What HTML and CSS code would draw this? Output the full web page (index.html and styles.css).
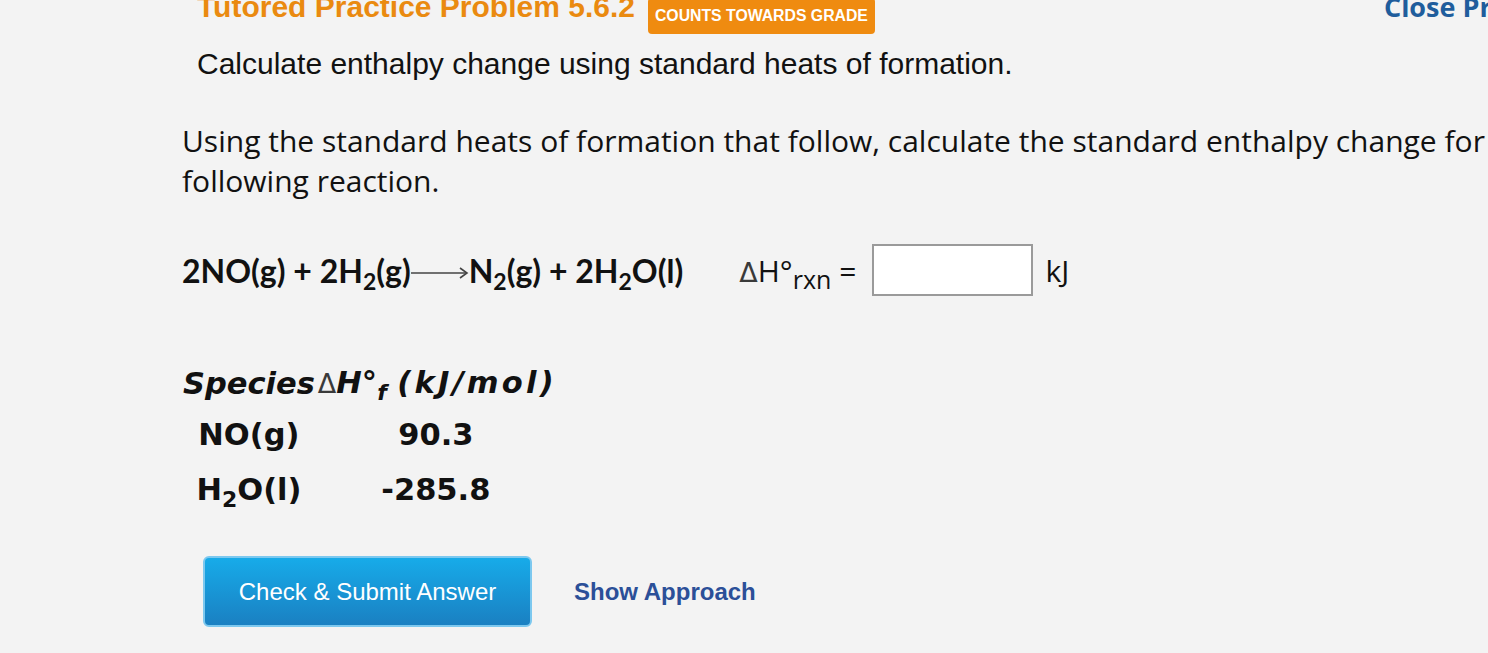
FILE: index.html
```html
<!DOCTYPE html>
<html>
<head>
<meta charset="utf-8">
<link rel="stylesheet" href="styles.css">
</head>
<body>
<div class="page">
  <div class="header">
    <h1 class="title">Tutored Practice Problem 5.6.2</h1>
    <span class="badge">COUNTS TOWARDS GRADE</span>
    <a class="close">Close Problem</a>
  </div>
  <p class="subtitle">Calculate enthalpy change using standard heats of formation.</p>

  <p class="prompt">Using the standard heats of formation that follow, calculate the standard enthalpy change for the<br>following reaction.</p>

  <div class="equation-row">
    <div class="equation">2NO(g) + 2H<sub>2</sub>(g)<span class="arrow"><svg width="58" height="14" viewBox="0 0 58 14"><line x1="0" y1="7" x2="56" y2="7" stroke="#444" stroke-width="1.6"/><polyline points="49,2 56,7 49,12" fill="none" stroke="#444" stroke-width="1.6"/></svg></span>N<sub>2</sub>(g) + 2H<sub>2</sub>O(l)</div>
    <div class="answer">
      <span class="dh"><span class="delta">Δ</span>H°<sub>rxn</sub></span>
      <span class="eq">=</span>
      <input class="box" type="text">
      <span class="unit">kJ</span>
    </div>
  </div>

  <table class="data">
    <tr class="head"><th>Species</th><th><span class="delta">Δ</span>H°<sub>f</sub> <span class="units">(kJ/mol)</span></th></tr>
    <tr><td>NO(g)</td><td>90.3</td></tr>
    <tr><td>H<sub>2</sub>O(l)</td><td>-285.8</td></tr>
  </table>

  <div class="actions">
    <button class="submit">Check &amp; Submit Answer</button>
    <a class="approach">Show Approach</a>
  </div>
</div>
</body>
</html>
```

FILE: styles.css
```css
html, body {
  margin: 0;
  padding: 0;
  background: #f3f3f3;
  overflow: hidden;
}
.page {
  width: 1418px;
  padding-left: 182px;
}
.header {
  display: flex;
  align-items: flex-start;
  margin-top: -8px;
  height: 42px;
  white-space: nowrap;
}
.title {
  margin: 0 0 0 15px;
  font-family: "Liberation Sans", Arial, sans-serif;
  font-weight: bold;
  font-size: 30px;
  line-height: 30px;
  color: #ea8a10;
}
.badge {
  margin-left: 13px;
  margin-top: 6px;
  background: #ef8b10;
  color: #fff;
  font-family: "Liberation Sans", Arial, sans-serif;
  font-weight: bold;
  font-size: 15.8px;
  line-height: 36px;
  padding: 0 7px;
  border-radius: 4px;
}
.close {
  margin-left: 509px;
  font-family: "Open Sans", sans-serif;
  font-weight: bold;
  font-size: 27px;
  line-height: 30px;
  color: #1f5d9c;
}
.subtitle {
  margin: 13px 0 0 15px;
  font-family: "Liberation Sans", Arial, sans-serif;
  font-size: 30px;
  line-height: 34px;
  color: #111;
}
.prompt {
  margin: 40px 0 0 0;
  font-family: "Open Sans", sans-serif;
  font-size: 30px;
  line-height: 40px;
  color: #111;
  white-space: nowrap;
}
.equation-row {
  display: flex;
  align-items: center;
  margin-top: 43px;
}
.equation {
  font-family: Lato, "Open Sans", sans-serif;
  font-weight: bold;
  font-size: 32px;
  color: #111;
  white-space: nowrap;
}
.equation sub {
  font-size: 23px;
  vertical-align: -7px;
  line-height: 0;
}
.arrow svg {
  vertical-align: 3px;
}
.answer {
  display: flex;
  align-items: center;
  margin-left: 56px;
  font-family: "Open Sans", sans-serif;
  font-size: 30px;
  color: #111;
}
.delta {
  font-family: "DejaVu Sans", sans-serif;
  font-size: 27px;
  color: #3a3a3a;
}
.dh sub {
  font-size: 25px;
  vertical-align: -7px;
  line-height: 0;
}
.eq {
  margin-left: 8px;
}
.box {
  margin-left: 16px;
  width: 161px;
  height: 52px;
  box-sizing: border-box;
  border: 2px solid #9a9a9a;
  background: #fff;
  padding: 0;
}
.unit {
  margin-left: 12px;
}
.data {
  margin-top: 71px;
  margin-left: 1px;
  border-collapse: collapse;
  font-family: "DejaVu Sans", Verdana, sans-serif;
  font-weight: bold;
  font-size: 30.5px;
  color: #111;
}
.data th {
  font-style: italic;
  padding: 0 0 7px 0;
  line-height: 32px;
  text-align: center;
}
.data th .delta {
  font-style: normal;
  font-weight: normal;
  font-size: 27px;
  margin-left: 3px;
}
.data .units {
  letter-spacing: 3.2px;
}
.data td {
  padding: 0;
  line-height: 55px;
  text-align: center;
}
.data sub {
  font-size: 22px;
  vertical-align: -7px;
  line-height: 0;
}
.actions {
  display: flex;
  align-items: center;
  margin-top: 39px;
  margin-left: 21px;
}
.submit {
  width: 329px;
  height: 71px;
  box-sizing: border-box;
  border: 2px solid #7cc8ef;
  border-radius: 6px;
  background: linear-gradient(#17abe9, #1a80c2);
  color: #fff;
  font-family: "Liberation Sans", Arial, sans-serif;
  font-size: 24px;
  padding: 0;
}
.approach {
  margin-left: 42px;
  font-family: "Liberation Sans", Arial, sans-serif;
  font-weight: bold;
  font-size: 24px;
  color: #2b4f98;
}
```
